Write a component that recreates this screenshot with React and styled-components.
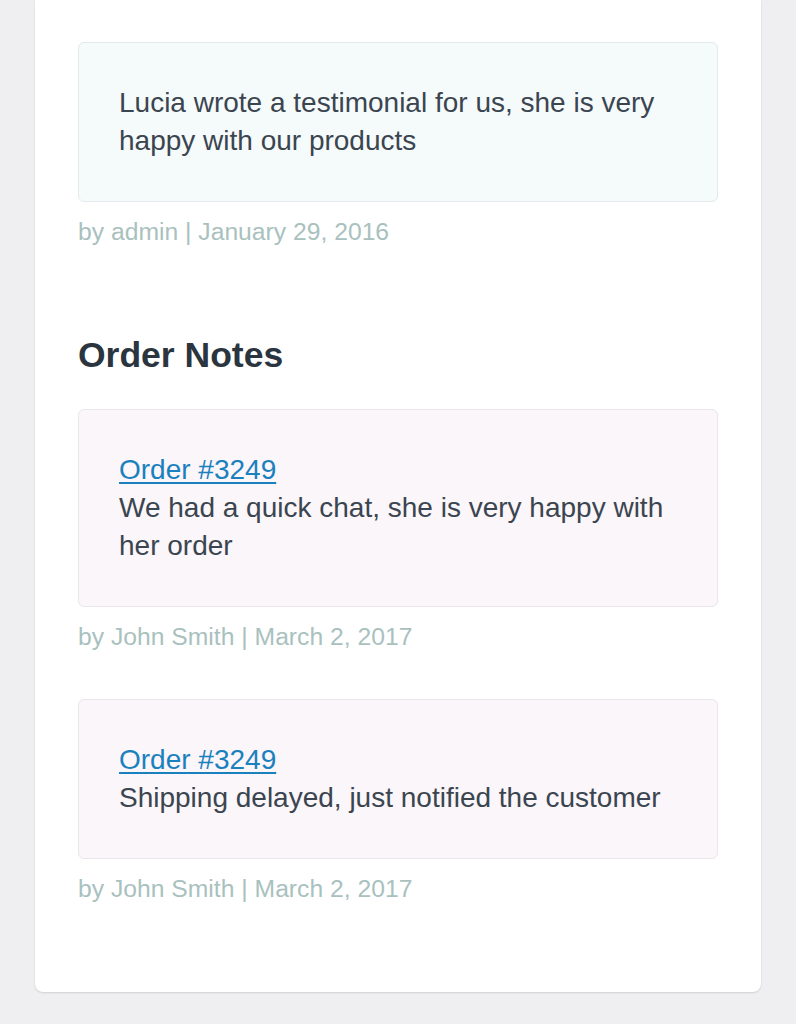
import React from "react";
import styled, { createGlobalStyle } from "styled-components";

const Global = createGlobalStyle`
  html, body { margin: 0; padding: 0; background: #efeff2; }
  body { font-family: "Liberation Sans", Arial, Helvetica, sans-serif; }
`;

const Page = styled.div`
  padding: 0 35px 0 35px;
  min-height: 1024px;
  box-sizing: border-box;
`;

const Card = styled.div`
  background: #ffffff;
  border-radius: 0 0 8px 8px;
  box-shadow: 0 1px 2px rgba(0, 0, 0, 0.12), 0 0 1px rgba(0, 0, 0, 0.08);
  padding: 42px 43px 88px 43px;
`;

const Note = styled.div`
  background: ${(p) => (p.$tone === "blue" ? "#f5fafb" : "#faf6f9")};
  border: 1px solid ${(p) => (p.$tone === "blue" ? "#e2eaec" : "#ebe6e9")};
  border-radius: 6px;
  padding: 41px 40px 41px 40px;
  color: #3b4550;
  font-size: 28px;
  line-height: 38px;
`;

const OrderLink = styled.a`
  display: block;
  color: #1b80be;
  text-decoration: underline;
  text-underline-offset: 3px;
  text-decoration-thickness: 2px;
`;

const Meta = styled.div`
  color: #a9c1be;
  font-size: 24.7px;
  line-height: 30px;
  margin-top: 15px;
  margin-bottom: ${(p) => p.$gap}px;
`;

const Heading = styled.h2`
  margin: 0 0 34px 0;
  color: #2b3540;
  font-size: 35.5px;
  font-weight: 700;
  line-height: 40px;
`;

export default function App() {
  return (
    <>
      <Global />
      <Page>
        <Card>
          <Note $tone="blue">
            Lucia wrote a testimonial for us, she is very happy with our products
          </Note>
          <Meta $gap={88}>by admin | January 29, 2016</Meta>

          <Heading>Order Notes</Heading>

          <Note>
            <OrderLink href="#">Order #3249</OrderLink>
            We had a quick chat, she is very happy with her order
          </Note>
          <Meta $gap={47}>by John Smith | March 2, 2017</Meta>

          <Note>
            <OrderLink href="#">Order #3249</OrderLink>
            Shipping delayed, just notified the customer
          </Note>
          <Meta $gap={0}>by John Smith | March 2, 2017</Meta>
        </Card>
      </Page>
    </>
  );
}
